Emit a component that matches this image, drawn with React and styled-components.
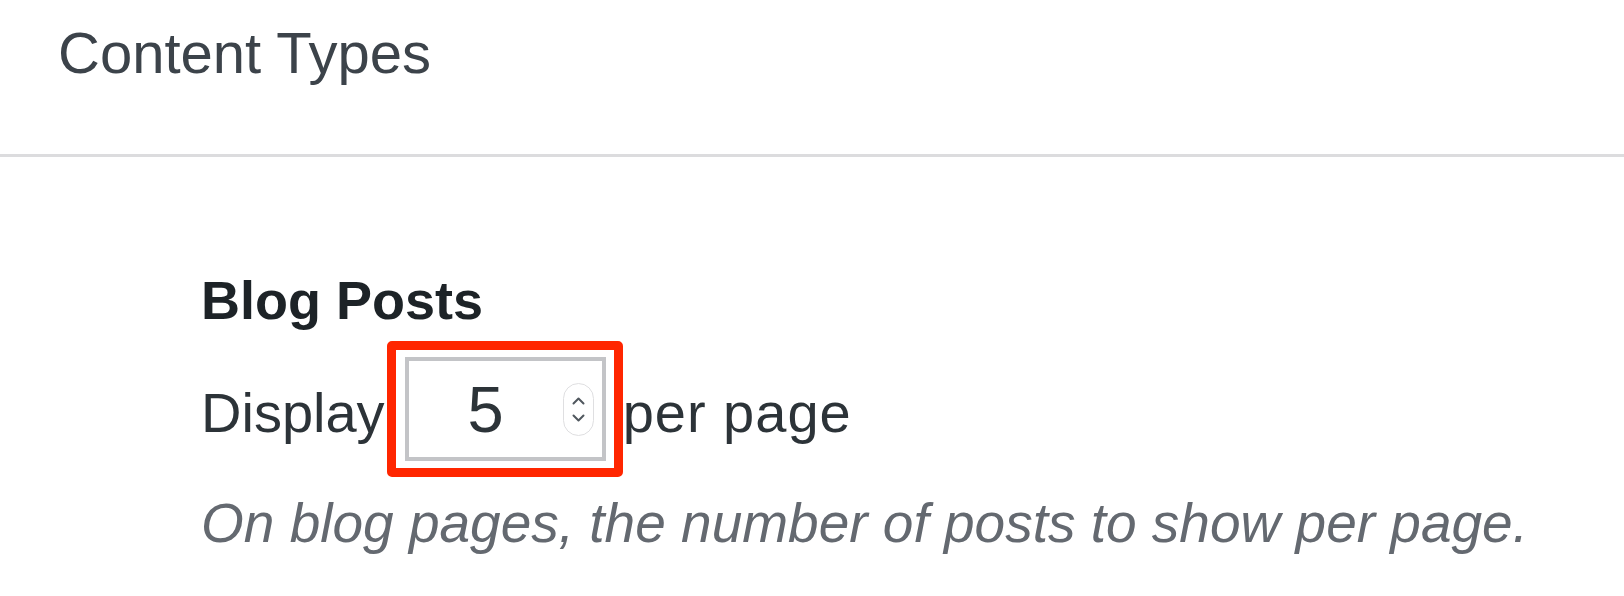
import React from 'react';
import styled, {createGlobalStyle} from 'styled-components';

const GlobalStyle = createGlobalStyle`
  html, body {
    margin: 0;
    padding: 0;
    background: #ffffff;
  }
  body {
    font-family: "Liberation Sans", Arial, sans-serif;
  }
`;

const Page = styled.div`
  width: 1624px;
  min-height: 596px;
  background: #ffffff;
`;

const Header = styled.header`
  height: 133px;
  padding: 21px 0 0 58px;
  border-bottom: 3px solid #dcdcde;
`;

const Title = styled.h2`
  margin: 0;
  font-size: 58px;
  line-height: 64px;
  font-weight: 400;
  color: #3c434a;
`;

const Section = styled.section`
  padding: 111px 0 0 201px;
`;

const FieldName = styled.h3`
  margin: 0;
  font-size: 54px;
  line-height: 64px;
  font-weight: 700;
  color: #1d2327;
`;

const Row = styled.div`
  display: flex;
  align-items: baseline;
  margin-top: 9px;
  font-size: 56px;
  line-height: 64px;
  color: #2c3338;
`;

const Label = styled.span`
  margin-right: ${(p) => p.$gap || 0}px;
  letter-spacing: ${(p) => p.$spacing || 0}px;
`;

const Highlight = styled.div`
  display: flex;
  padding: 7px 8px 7px 9px;
  border: 9px solid #ff2600;
  border-radius: 5px;
`;

const InputFrame = styled.div`
  display: flex;
  align-items: center;
  width: 193px;
  height: 96px;
  border: 4px solid #c3c4c7;
  background: #ffffff;
`;

const NumberInput = styled.input`
  width: 154px;
  height: 96px;
  padding: 0;
  border: none;
  outline: none;
  background: transparent;
  font-family: "Liberation Sans", Arial, sans-serif;
  font-size: 65px;
  color: #2c3338;
  text-align: center;
  appearance: textfield;
  -moz-appearance: textfield;
  &::-webkit-inner-spin-button,
  &::-webkit-outer-spin-button {
    -webkit-appearance: none;
    margin: 0;
  }
`;

const Spinner = styled.span`
  display: flex;
  flex-direction: column;
  align-items: center;
  justify-content: center;
  gap: 9px;
  box-sizing: border-box;
  width: 31px;
  height: 53px;
  margin-left: 0;
  border: 1.5px solid #dfdfe1;
  border-radius: 16px;
`;

const Description = styled.p`
  margin: 14px 0 0;
  font-size: 55px;
  line-height: 64px;
  font-style: italic;
  color: #646970;
`;

const Chevron = ({up}) => (
  <svg width="13" height="8" viewBox="0 0 13 8" fill="none">
    <path
      d={up ? 'M1.5 6.5 L6.5 1.5 L11.5 6.5' : 'M1.5 1.5 L6.5 6.5 L11.5 1.5'}
      stroke="#50575e"
      strokeWidth="2"
      strokeLinecap="round"
      strokeLinejoin="round"
    />
  </svg>
);

const App = () => {
  return (
    <Page>
      <GlobalStyle />
      <Header>
        <Title>Content Types</Title>
      </Header>
      <Section>
        <FieldName>Blog Posts</FieldName>
        <Row>
          <Label $gap={2}>Display</Label>
          <Highlight>
            <InputFrame>
              <NumberInput type="number" defaultValue={5} min={1} step={1} />
              <Spinner>
                <Chevron up />
                <Chevron />
              </Spinner>
            </InputFrame>
          </Highlight>
          <Label $spacing={1}>per page</Label>
        </Row>
        <Description>
          On blog pages, the number of posts to show per page.
        </Description>
      </Section>
    </Page>
  );
};

export default App;
